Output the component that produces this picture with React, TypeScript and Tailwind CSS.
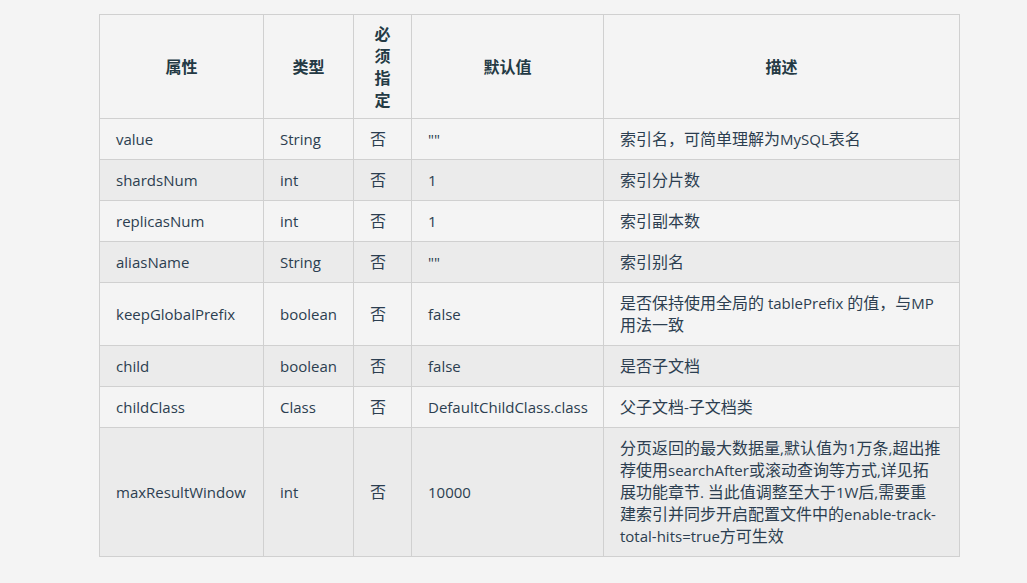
const rows = [
  { name: "value", type: "String", req: "否", def: '""', desc: "索引名，可简单理解为MySQL表名" },
  { name: "shardsNum", type: "int", req: "否", def: "1", desc: "索引分片数" },
  { name: "replicasNum", type: "int", req: "否", def: "1", desc: "索引副本数" },
  { name: "aliasName", type: "String", req: "否", def: '""', desc: "索引别名" },
  { name: "keepGlobalPrefix", type: "boolean", req: "否", def: "false", desc: "是否保持使用全局的 tablePrefix 的值，与MP用法一致" },
  { name: "child", type: "boolean", req: "否", def: "false", desc: "是否子文档" },
  { name: "childClass", type: "Class", req: "否", def: "DefaultChildClass.class", desc: "父子文档-子文档类" },
  {
    name: "maxResultWindow",
    type: "int",
    req: "否",
    def: "10000",
    desc: "分页返回的最大数据量,默认值为1万条,超出推荐使用searchAfter或滚动查询等方式,详见拓展功能章节. 当此值调整至大于1W后,需要重建索引并同步开启配置文件中的enable-track-total-hits=true方可生效",
  },
]

// CJK glyphs in the source render a touch larger than the latin text
function Txt({ s }: { s: string }) {
  const parts = s.split(/([\u3000-\u9fff\uff00-\uffef]+)/)
  return (
    <>
      {parts.map((p, i) =>
        i % 2 === 1 ? (
          <span key={i} className="text-[16px]">
            {p}
          </span>
        ) : (
          p
        )
      )}
    </>
  )
}

const cell = "border border-[#d0d0d0] px-4 py-[9px] align-middle"

export default function App() {
  return (
    <div
      className="min-h-[583px] w-full bg-[#f4f4f4] pl-[99px] pt-[14px] text-[15px] leading-[22px] text-[#2c3e50]"
      style={{ fontFamily: '"Open Sans", "Noto Sans CJK SC", sans-serif' }}
    >
      <table className="table-fixed border-collapse w-[860px]">
        <colgroup>
          <col className="w-[164px]" />
          <col className="w-[90px]" />
          <col className="w-[58px]" />
          <col className="w-[192px]" />
          <col className="w-[356px]" />
        </colgroup>
        <thead>
          <tr className="h-[104px]">
            {["属性", "类型", "必须指定", "默认值", "描述"].map((h) => (
              <th
                key={h}
                className="border border-[#d0d0d0] px-4 py-[7px] text-center font-bold text-[#243a44] break-all"
              >
                <Txt s={h} />
              </th>
            ))}
          </tr>
        </thead>
        <tbody>
          {rows.map((r, i) => (
            <tr key={r.name} className={i % 2 === 1 ? "bg-[#ebebeb]" : "bg-[#f4f4f4]"}>
              <td className={cell}>{r.name}</td>
              <td className={cell}>{r.type}</td>
              <td className={cell}>
                <Txt s={r.req} />
              </td>
              <td className={cell}>{r.def}</td>
              <td className="border border-[#d0d0d0] pl-4 pr-[17px] py-[9px] align-middle">
                <Txt s={r.desc} />
              </td>
            </tr>
          ))}
        </tbody>
      </table>
    </div>
  )
}
